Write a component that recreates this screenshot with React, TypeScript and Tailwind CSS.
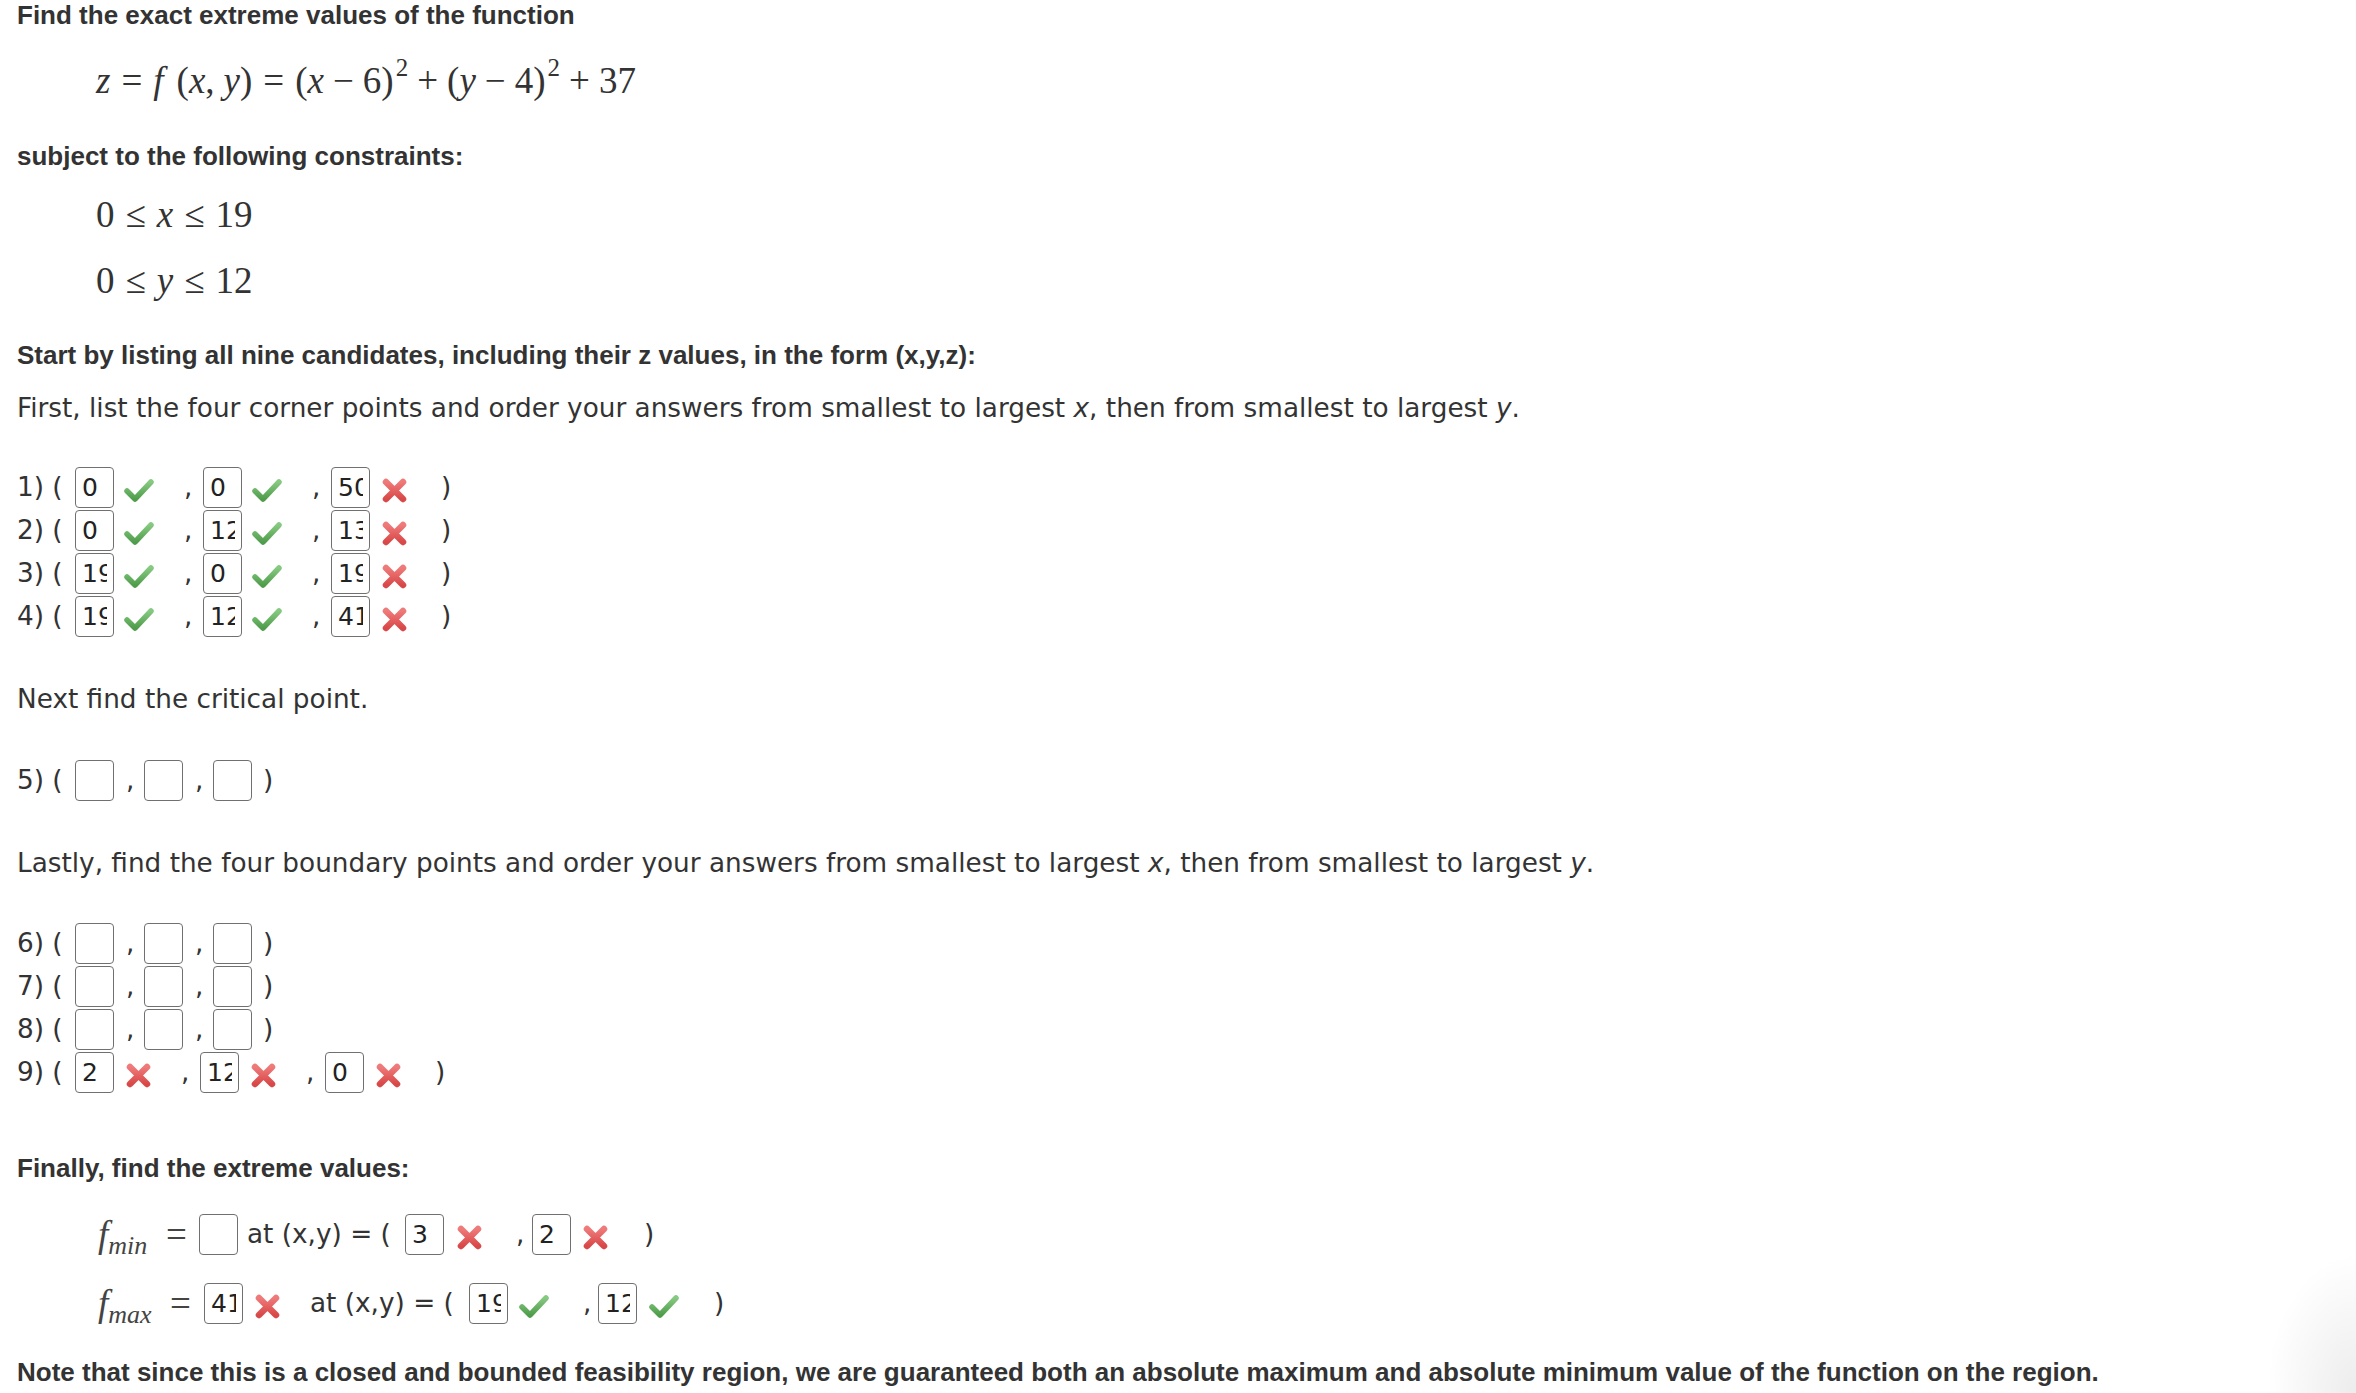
import React from "react";

const body = "font-['DejaVu_Sans',Verdana,sans-serif]";
const bold = "font-['Liberation_Sans',Arial,sans-serif] font-bold";
const serif = "font-['Liberation_Serif','Times_New_Roman',serif]";

const Check = () => (
  <svg width="32" height="28" viewBox="0 0 32 28">
    <defs>
      <linearGradient id="gchk" x1="0" y1="0" x2="0" y2="1">
        <stop offset="0" stopColor="#86c981" />
        <stop offset="1" stopColor="#4f9d4b" />
      </linearGradient>
    </defs>
    <path d="M4 15 L12 23 L28 6" fill="none" stroke="url(#gchk)" strokeWidth="5.5" strokeLinecap="round" strokeLinejoin="round" />
  </svg>
);

const Cross = () => (
  <svg width="27" height="27" viewBox="0 0 27 27">
    <defs>
      <linearGradient id="gx" x1="0" y1="0" x2="0" y2="1">
        <stop offset="0" stopColor="#ef7a7a" />
        <stop offset="1" stopColor="#d94848" />
      </linearGradient>
    </defs>
    <path d="M5 5 L22 22 M22 5 L5 22" fill="none" stroke="url(#gx)" strokeWidth="6.5" strokeLinecap="round" />
  </svg>
);

const Box = ({ v }: { v?: string }) => (
  <div className="w-[39px] h-[41px] shrink-0 border-[1.5px] border-[#707070] rounded-[4px] bg-white px-[6px] flex items-center">
    <div className={`overflow-hidden whitespace-nowrap w-full text-[25px] leading-none text-[#222] ${body}`}>{v}</div>
  </div>
);

type Cell = { v: string; ok: boolean };

const Icon = ({ ok }: { ok: boolean }) =>
  ok ? (
    <span className="ml-[9px] w-[32px] mt-[4px] flex shrink-0">
      <Check />
    </span>
  ) : (
    <span className="ml-[11px] w-[27px] mt-[5px] flex shrink-0">
      <Cross />
    </span>
  );

const GradedRow = ({ n, cells }: { n: number; cells: Cell[] }) => (
  <div className={`h-[43px] flex items-center text-[26.3px] text-[#333] ${body}`}>
    <span className="w-[58px] shrink-0 whitespace-pre">{`${n}) (`}</span>
    {cells.map((c, i) => (
      <React.Fragment key={i}>
        <Box v={c.v} />
        <Icon ok={c.ok} />
        {i < cells.length - 1 ? (
          <span className="w-[48px] pl-[29px] shrink-0">,</span>
        ) : (
          <span className="pl-[33px]">)</span>
        )}
      </React.Fragment>
    ))}
  </div>
);

const EmptyRow = ({ n }: { n: number }) => (
  <div className={`h-[43px] flex items-center text-[26.3px] text-[#333] ${body}`}>
    <span className="w-[58px] shrink-0 whitespace-pre">{`${n}) (`}</span>
    <Box />
    <span className="w-[30px] pl-[12px] shrink-0">,</span>
    <Box />
    <span className="w-[30px] pl-[12px] shrink-0">,</span>
    <Box />
    <span className="pl-[11px]">)</span>
  </div>
);

const I = ({ children }: { children: React.ReactNode }) => <span className="italic">{children}</span>;

const Sup = ({ children }: { children: React.ReactNode }) => (
  <span className="text-[25px] relative -top-[13px] ml-[2px]">{children}</span>
);

const Constraint = ({ v, hi }: { v: string; hi: string }) => (
  <div className={`h-[36px] pl-[79px] flex items-center text-[37px] whitespace-pre ${serif}`}>
    <span>0</span>
    <span className="mx-[11px]">≤</span>
    <I>{v}</I>
    <span className="mx-[11px]">≤</span>
    <span>{hi}</span>
  </div>
);

export default function App() {
  return (
    <div className="w-[2356px] h-[1393px] bg-white text-[#333] overflow-hidden relative">
      <div className="pl-[17px] flex flex-col">
        <div className={`h-[30px] flex items-center text-[26px] ${bold}`}>Find the exact extreme values of the function</div>

        <div className={`mt-[31px] h-[40px] pl-[79px] flex items-center text-[37px] text-[#333] whitespace-pre ${serif}`}>
          <I>z</I>
          <span className="mx-[11px]">=</span>
          <I>f</I>
          <span className="ml-[13px]">(</span>
          <I>x</I>
          <span>,</span>
          <span className="ml-[9px]">
            <I>y</I>
          </span>
          <span>)</span>
          <span className="mx-[11px]">=</span>
          <span>(</span>
          <I>x</I>
          <span className="mx-[9px]">−</span>
          <span>6)</span>
          <Sup>2</Sup>
          <span className="mx-[9px]">+</span>
          <span>(</span>
          <I>y</I>
          <span className="mx-[9px]">−</span>
          <span>4)</span>
          <Sup>2</Sup>
          <span className="mx-[9px]">+</span>
          <span>37</span>
        </div>

        <div className={`mt-[40px] h-[30px] flex items-center text-[26px] ${bold}`}>subject to the following constraints:</div>

        <div className="mt-[26px]">
          <Constraint v="x" hi="19" />
        </div>
        <div className="mt-[30px]">
          <Constraint v="y" hi="12" />
        </div>

        <div className={`mt-[41px] h-[30px] flex items-center text-[26px] ${bold}`}>
          Start by listing all nine candidates, including their z values, in the form (x,y,z):
        </div>
        <div className={`mt-[24px] h-[30px] flex items-center text-[26.3px] whitespace-pre ${body}`}>
          First, list the four corner points and order your answers from smallest to largest <I>x</I>, then from smallest to largest <I>y</I>.
        </div>

        <div className="mt-[42px] flex flex-col">
          <GradedRow n={1} cells={[{ v: "0", ok: true }, { v: "0", ok: true }, { v: "50", ok: false }]} />
          <GradedRow n={2} cells={[{ v: "0", ok: true }, { v: "12", ok: true }, { v: "13", ok: false }]} />
          <GradedRow n={3} cells={[{ v: "19", ok: true }, { v: "0", ok: true }, { v: "19", ok: false }]} />
          <GradedRow n={4} cells={[{ v: "19", ok: true }, { v: "12", ok: true }, { v: "41", ok: false }]} />
        </div>

        <div className={`mt-[47px] h-[30px] flex items-center text-[26.3px] ${body}`}>Next find the critical point.</div>

        <div className="mt-[44px]">
          <EmptyRow n={5} />
        </div>

        <div className={`mt-[47px] h-[30px] flex items-center text-[26.3px] whitespace-pre ${body}`}>
          Lastly, find the four boundary points and order your answers from smallest to largest <I>x</I>, then from smallest to largest <I>y</I>.
        </div>

        <div className="mt-[43px] flex flex-col">
          <EmptyRow n={6} />
          <EmptyRow n={7} />
          <EmptyRow n={8} />
          <GradedRow n={9} cells={[{ v: "2", ok: false }, { v: "12", ok: false }, { v: "0", ok: false }]} />
        </div>

        <div className={`mt-[59px] h-[30px] flex items-center text-[26px] ${bold}`}>Finally, find the extreme values:</div>

        {/* f_min row */}
        <div className={`mt-[30px] h-[43px] pl-[81px] flex items-center text-[26.3px] ${body}`}>
          <span className={`w-[64px] shrink-0 text-[#444] whitespace-pre ${serif}`}>
            <span className="italic text-[37px]">f</span>
            <span className="italic text-[26px] relative top-[7px]">min</span>
          </span>
          <span className={`ml-[4px] w-[25px] shrink-0 text-[37px] text-[#444] ${serif}`}>=</span>
          <span className="ml-[8px]">
            <Box />
          </span>
          <span className="ml-[9px] w-[150px] shrink-0 whitespace-pre">at (x,y) = (</span>
          <span className="ml-[8px]">
            <Box v="3" />
          </span>
          <span className="ml-[12px] w-[27px] mt-[5px] flex shrink-0">
            <Cross />
          </span>
          <span className="w-[49px] pl-[33px] shrink-0">,</span>
          <Box v="2" />
          <Icon ok={false} />
          <span className="pl-[35px]">)</span>
        </div>

        {/* f_max row */}
        <div className={`mt-[26px] h-[43px] pl-[81px] flex items-center text-[26.3px] ${body}`}>
          <span className={`w-[66px] shrink-0 text-[#444] whitespace-pre ${serif}`}>
            <span className="italic text-[37px]">f</span>
            <span className="italic text-[26px] relative top-[7px]">max</span>
          </span>
          <span className={`ml-[6px] w-[25px] shrink-0 text-[37px] text-[#444] ${serif}`}>=</span>
          <span className="ml-[9px]">
            <Box v="41" />
          </span>
          <Icon ok={false} />
          <span className="ml-[29px] w-[150px] shrink-0 whitespace-pre">at (x,y) = (</span>
          <span className="ml-[9px]">
            <Box v="19" />
          </span>
          <span className="ml-[10px] w-[32px] mt-[4px] flex shrink-0">
            <Check />
          </span>
          <span className="w-[48px] pl-[33px] shrink-0">,</span>
          <Box v="12" />
          <span className="ml-[11px] w-[32px] mt-[4px] flex shrink-0">
            <Check />
          </span>
          <span className="pl-[34px]">)</span>
        </div>

        <div className={`mt-[32px] h-[30px] flex items-center text-[26px] whitespace-pre ${bold}`}>
          Note that since this is a closed and bounded feasibility region, we are guaranteed both an absolute maximum and absolute minimum value of the function on the region.
        </div>
      </div>
      <div className="absolute right-0 bottom-0 w-[90px] h-[140px] pointer-events-none bg-[radial-gradient(ellipse_at_bottom_right,#ececec,transparent_70%)]" />
    </div>
  );
}
